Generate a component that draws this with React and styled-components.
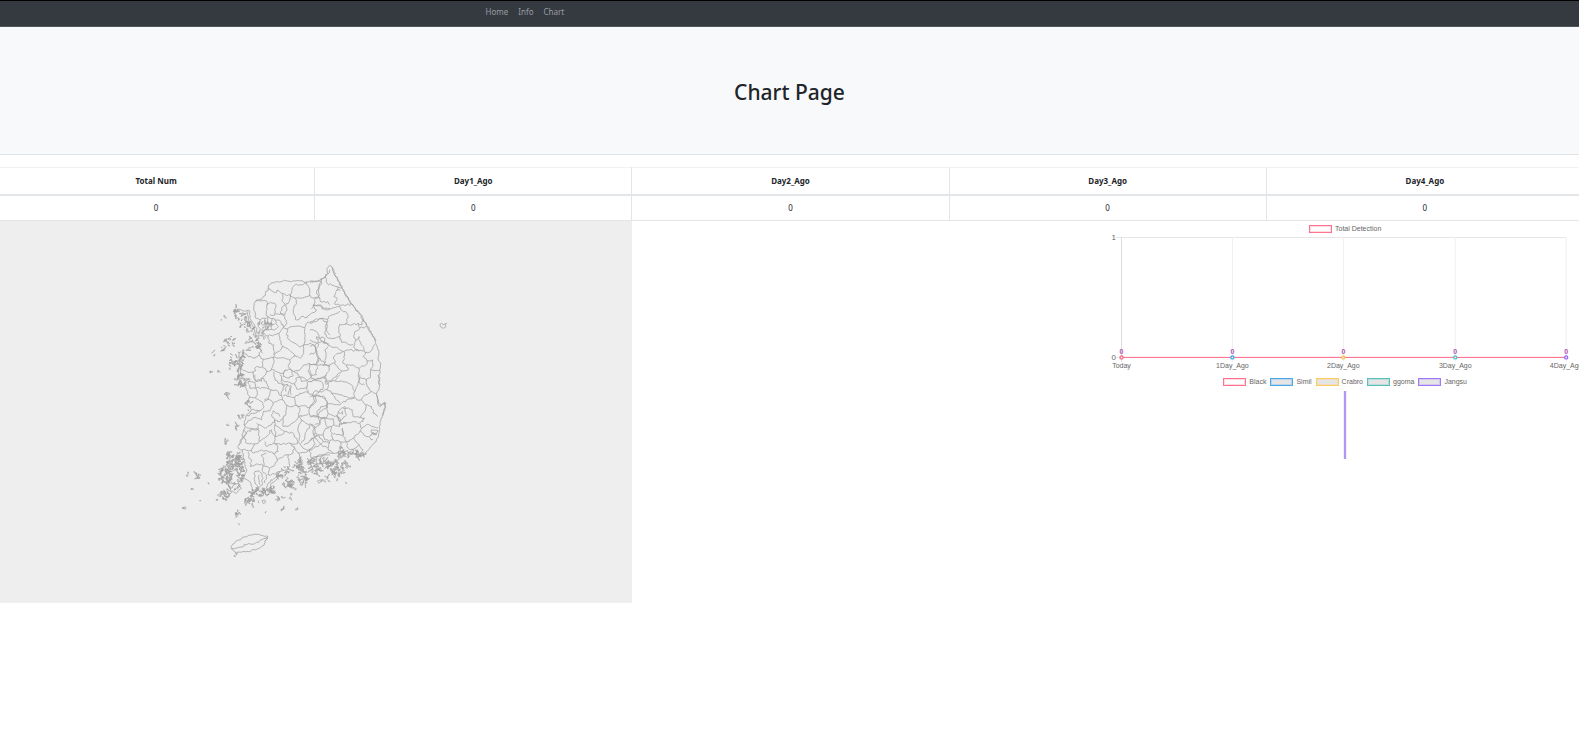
import React from "react";
import styled, { createGlobalStyle } from "styled-components";

const GlobalStyle = createGlobalStyle`
  * { box-sizing: border-box; }
  body {
    margin: 0;
    background: #fff;
    color: #212529;
    font-family: "Noto Sans", "Open Sans", sans-serif;
    font-size: 8px;
    line-height: 12px;
    overflow-x: hidden;
  }
`;

const NavBar = styled.nav`
  height: 27px;
  padding-top: 5px;
  background: #343a40;
  border-top: 1px solid #000;
  border-bottom: 1px solid #50555b;
`;

const NavInner = styled.div`
  display: flex;
  gap: 10px;
  max-width: 608px;
  margin: 0 auto;
`;

const NavLink = styled.a`
  color: #9a9da0;
  text-decoration: none;
`;

const Hero = styled.header`
  padding: 50px 16px 46px;
  background: #f8f9fb;
  border-bottom: 1px solid #e1e4e7;
  text-align: center;
`;

const Title = styled.h1`
  margin: 0;
  font-size: 21px;
  font-weight: 500;
  line-height: 31px;
`;

const TableWrap = styled.div`
  margin: 12px -5px 0 -3px;
`;

const Table = styled.table`
  width: 100%;
  table-layout: fixed;
  border-collapse: collapse;
  text-align: center;
`;

const HeadCell = styled.th`
  height: 27px;
  padding: 0;
  border: 1px solid #e3e6e9;
  border-top-color: #f1f2f4;
  border-bottom: 2px solid #e3e6e9;
  font-weight: 700;
`;

const Cell = styled.td`
  height: 26px;
  padding: 0;
  border: 1px solid #e3e6e9;
`;

const Panels = styled.main`
  display: flex;
  align-items: flex-start;
  justify-content: space-between;
`;

const MapPanel = styled.section`
  width: 40%;
  background: #eee;
`;

const MapDrawing = styled.svg`
  display: block;
  width: 100%;
  fill: none;
  stroke: #a0a0a0;
  stroke-linejoin: round;
`;

const ChartPanel = styled.section`
  width: 30%;
  padding: 4px 0 0 6px;
  overflow: hidden;
  color: #666;
  font-family: "Liberation Sans", Arial, sans-serif;
  font-size: 7px;
`;

const Legend = styled.ul`
  display: flex;
  justify-content: center;
  gap: 4px;
  margin: 0;
  padding: 0;
  list-style: none;
  line-height: 8px;
`;

const LegendItem = styled.li`
  display: flex;
  align-items: center;
  gap: 3px;
`;

const Swatch = styled.span`
  width: 23px;
  height: 8px;
  border: 1px solid ${(p) => p.$color};
  outline: 1px solid ${(p) => p.$color}44;
  outline-offset: -2px;
  background: ${(p) => (p.$filled ? "#e5e5e5" : "#fff")};
`;

const LineChart = styled.svg`
  display: block;
  width: 100%;
  font-size: 7px;
  fill: #666;
`;

const Doughnut = styled.svg`
  display: block;
  width: 4px;
  height: 68px;
  margin: 5px auto 0;
`;

/* Boundary lines, grouped by map sheet; three units make one pixel. */
const sheets = [
  {
    x: 200, y: 255,
    lines: [
      "163,150 168,137 185,133 197,115 205,100 212,88 228,80 250,78 275,80 300,78 320,82 345,79 360,78 372,68 384,58 390,45",
      "205,100 215,108 230,112 232,105 246,116 262,122 271,120",
      "320,80 326,95 330,108 328,122",
      "271,120 278,98 290,88 300,90 320,84",
      "271,120 285,130 305,130 322,125 330,120 340,130 360,128",
      "360,78 358,100 350,115 360,128 362,140 384,140 390,150",
      "163,150 165,170 168,190 182,195",
      "168,137 200,138 202,150 198,180 205,185",
      "200,150 212,142 228,148 224,165 225,180 210,180",
      "246,116 248,140 256,150 245,160 243,177 225,178",
      "271,120 268,140 258,152 262,165 255,180 243,177 255,185 262,205 250,218 262,222 275,215 295,213 315,218",
      "285,130 290,145 282,160 280,175 290,195 305,185 322,188 335,175 350,165 340,150 352,150 362,150 375,160 390,160",
      "315,218 320,205 345,195 360,190 380,200 378,225 390,240",
      "315,218 316,240 312,270 300,276 285,265 268,255 260,240 262,222",
      "312,270 330,265 345,275 355,260 350,245 375,250 372,265 388,268",
      "250,218 238,235 222,240 205,243 190,235",
      "238,235 240,255 250,275 235,290 222,300",
      "205,243 207,265 222,270 225,290 220,308 190,313 178,300 185,285 170,270",
      "250,275 268,285 285,300 300,310 312,295 312,270",
      "220,308 250,308 270,315 285,300",
      "270,315 265,335 282,350 300,345 312,330 325,325 350,330 355,310 352,290 345,275",
      "220,308 222,325 215,345 230,350 250,355 256,345 275,345 280,360 268,370 250,365 256,345",
      "190,313 188,335 200,350 215,345",
      "130,290 145,305 165,310 178,300",
      "120,340 140,350 160,355 170,335 188,335",
      "160,355 165,375 185,380 200,350",
      "222,350 225,375 235,385 255,390",
      "330,325 325,350 335,365 350,360 352,335",
      "355,310 372,320 375,330 390,335",
      "282,350 300,365 305,380 325,375 335,365",
      "145,165 145,190 155,205 165,225 160,240 172,255 178,280 188,295",
      "147,165 150,190 160,205 172,222 166,240 178,252",
      "102,170 115,162 130,168 145,165",
      "115,290 120,320 115,350 120,375 125,390",
      "128,292 126,320 122,345 128,370 140,385",
      "182,195 195,190 205,185 225,195 236,215 225,225 205,225 185,225 175,215 182,195",
      "185,210 205,205 225,208",
      "205,187 207,225",
      "195,192 196,224",
      "217,192 216,222",
      "225,195 243,200 250,218",
    ],
  },
  {
    x: 310, y: 255,
    lines: [
      "0,78 15,80 27,78 36,72 47,66 53,55 54,38 60,31 66,35 70,50 78,66 87,80 95,98 105,118 120,140 135,160 150,178 158,192 170,215 185,238 196,258 205,285 206,305 212,330 210,345 208,365 208,390",
      "66,36 72,50 80,66 90,82 97,98 108,118 122,140 137,160 153,178 160,192 173,215 188,238 198,258",
      "36,72 32,90 26,105 26,125 16,130 12,150 5,162",
      "47,66 52,85 72,92 85,96 95,98",
      "85,96 78,108 92,106",
      "78,112 72,125 82,130 75,148 90,152 125,148",
      "12,150 28,152 38,162 55,165 75,158 90,155 94,165 108,170 115,182 112,200 105,208 90,208",
      "52,194 62,182 75,178 90,168",
      "0,205 20,200 38,190 52,194 52,215 45,238 55,250 75,250 90,245 88,225 90,208",
      "105,208 125,210 145,205 158,208 158,192",
      "145,205 150,220 135,230 132,248 138,258 134,280 148,288",
      "150,220 168,215",
      "90,245 95,262 115,268 130,270",
      "138,258 148,245 153,265 162,278 165,288",
      "0,255 20,265 45,262 60,272 85,280 100,290 120,285 148,288 180,292 190,275 196,268",
      "45,262 30,250 20,230 0,225",
      "25,265 18,290 28,310 20,330 40,332 48,310 45,285 55,275",
      "20,330 0,330",
      "40,332 60,330 75,325 72,305 85,295 100,290",
      "75,325 85,340 95,348 115,345 110,330 100,325 105,300 105,290",
      "110,330 130,330 148,340 168,330 172,318 160,305 168,292",
      "172,318 188,315 190,330 182,345 210,346",
      "148,340 146,365 150,385 165,390",
      "182,345 180,370 168,375",
      "60,330 55,350 45,365 50,390",
      "95,348 80,365 65,378 50,380",
      "0,345 5,372 25,370 45,365",
      "0,275 12,270 20,290 0,300",
      "391,208 396,206 402,209 410,205 409,215 402,220 395,218 391,208",
    ],
  },
  {
    x: 200, y: 375,
    lines: [
      "115,0 122,20 130,32 140,45 148,70 142,90 155,105 140,120 132,150 148,160 175,163",
      "132,165 140,175 130,190 120,205 115,220 128,225 130,245 135,265 140,290 130,310 150,320 165,350",
      "135,155 130,175 124,192 117,210",
      "148,70 165,68 190,85 192,95 180,108 155,105",
      "145,20 165,22 168,40 172,60 165,68",
      "168,40 185,38 205,42 215,45 210,60 205,72 193,80",
      "165,0 168,20 185,10 200,20 207,42",
      "130,10 150,12 145,20 150,40 168,40",
      "215,45 235,50 245,62 248,75 230,80 220,85 210,75 193,75",
      "245,62 252,35 245,15 240,0",
      "248,75 260,90 258,110 250,130 240,140 225,135 215,120 220,108 235,115 240,125",
      "192,108 210,108 220,85",
      "260,90 280,95 290,92 300,100 297,125 285,140 270,152 250,155 250,130",
      "140,122 165,115 180,108",
      "132,150 155,135 165,128 185,135 190,120 192,108",
      "175,163 178,150 195,160 215,150 225,135",
      "170,145 178,150",
      "132,185 145,168 160,163 175,163 178,200 165,207 140,205 132,185",
      "178,200 195,190 215,165 225,185 220,205 200,215 195,200",
      "165,207 155,225 128,225",
      "155,225 160,235 185,225 205,230 220,235 235,230 232,210 222,205",
      "225,185 245,180 255,170 280,175 290,190 295,205 270,205 240,208 222,205",
      "225,135 225,150 245,165 255,170",
      "225,150 225,185",
      "297,125 305,135 295,160 300,185 295,200 310,220 330,225 345,210 340,190 325,205 312,210",
      "305,135 318,145 332,150 320,170 315,190 305,205",
      "297,95 315,92 330,98 328,115 312,122 297,125",
      "250,62 270,65 285,68 290,92 297,95",
      "285,68 300,55 325,52 340,65 345,80 330,98",
      "325,52 322,35 325,20 310,8 288,10 285,30 290,42 305,40 322,35",
      "252,35 262,28 272,38 265,62",
      "245,15 265,22 285,30",
      "262,28 258,50",
      "272,30 275,60",
      "340,65 360,62 375,68 382,80 380,100 360,110 355,125 330,122 328,115",
      "355,125 360,150 345,160 332,150",
      "345,175 360,190 370,200 390,205",
      "345,160 342,190",
      "325,20 345,15 365,20 370,38 360,50 345,48 340,62",
      "355,125 375,130 378,150 388,160",
      "145,232 155,260 150,275 175,268 190,272 192,250 185,240 200,235",
      "190,272 210,280 225,270 232,255 220,235",
      "210,280 205,300 225,298 240,290",
      "232,255 250,245 265,240 280,235 282,215 270,205",
      "165,290 178,288 187,300 188,330 175,340 165,320 165,290",
      "178,300 180,330",
      "190,272 188,290 200,300 195,325",
      "282,215 295,235 300,250 310,260",
      "295,235 320,232 330,225",
      "265,240 268,265 265,285 240,290 225,310 205,325 200,345",
      "240,290 235,310 215,325 208,345",
      "330,225 335,250 350,245 370,240 390,240",
      "335,250 332,262 350,270 375,265 390,266",
      "90,340 115,325 125,340 110,355 92,350 90,340",
      "350,245 350,300",
      "300,265 318,300 316,340",
    ],
  },
  {
    x: 310, y: 375,
    lines: [
      "205,0 210,15 208,40 200,60 204,85 212,95 225,82 226,95 218,120 212,150 208,175 200,195 180,220 165,240",
      "202,60 206,84 213,92 228,84 228,98 220,122",
      "0,20 20,15 45,10 50,0",
      "45,10 55,28 60,20 75,18 90,0",
      "55,28 52,45 65,55 90,60 110,65 132,70 135,50 130,35 115,25 95,18 75,18",
      "135,50 145,25 150,0",
      "150,8 170,15 172,35 185,50 200,55",
      "132,70 155,75 165,60 185,50",
      "52,45 30,50 18,60 0,65",
      "18,60 15,85 0,100",
      "18,62 35,65 48,75 52,90 70,88 90,90 100,80 132,70",
      "65,55 80,75 90,85",
      "52,90 40,95 25,105 22,125 35,132 50,130 55,115 52,90",
      "155,75 168,90 165,110 150,128 130,125 128,105 110,100 100,100",
      "168,90 185,95 190,115 205,125",
      "55,115 75,125 85,115 95,100 105,95 110,120 95,135 80,125",
      "85,112 100,118 98,108",
      "70,130 72,150 90,155 88,135",
      "0,145 15,155 10,175 15,185 0,200",
      "0,125 22,125",
      "15,150 30,145 35,132 50,130 70,132",
      "15,185 40,180 48,160 65,155 72,150",
      "88,150 110,145 130,140 150,145 155,160 150,170 130,190 110,200 100,180 98,160",
      "150,145 165,130 150,128",
      "155,160 175,148 205,160",
      "185,165 205,168 198,180 186,175 185,165",
      "150,170 170,185 190,195",
      "98,160 100,180 70,178",
      "110,200 115,220 130,225 148,210 135,195 130,190",
      "148,210 160,225 150,240",
      "40,180 45,195 60,200 70,195 65,178 65,155",
      "60,200 55,220 70,235 90,230 95,215 90,200 70,195",
      "90,200 110,200",
      "0,225 25,215 40,200",
      "15,185 30,205 40,215 55,220",
      "15,245 30,240 50,235 70,235",
      "90,230 115,238 140,236 165,240",
      "40,240 30,265",
    ],
  },
  {
    x: 170, y: 430,
    lines: [
      "183,352 190,342 202,332 222,322 245,316 268,313 285,320 292,325 285,340 275,350 258,360 235,365 215,367 200,370 190,362 183,352",
      "186,356 210,352 230,345 255,342 270,332 288,326",
      "196,368 200,376 203,368",
      "288,318 294,320 292,328",
      "277,212 285,211 287,218 280,221 277,212",
      "265,213 267,220",
    ],
  },
];

/* Island groups along the coast: centre x, centre y, spread x, spread y, count. */
const islands = [
  [237, 312, 4, 4, 16], [242, 317, 5, 3, 7], [244, 325, 6, 6, 18], [251, 330, 5, 6, 10],
  [229, 341, 7, 6, 15], [255, 344, 7, 8, 26], [223, 348, 2, 3, 5], [236, 363, 7, 9, 32],
  [243, 355, 4, 4, 8], [213, 372, 9, 1, 5], [222, 320, 5, 5, 3], [213, 355, 3, 2, 2],
  [266, 325, 8, 5, 14], [260, 334, 4, 3, 8], [241, 380, 5, 8, 22], [243, 384, 4, 3, 10],
  [225, 394, 3, 1, 4], [249, 406, 3, 6, 10], [242, 416, 3, 2, 7], [236, 427, 2, 2, 5],
  [229, 426, 1, 1, 1], [226, 442, 2, 3, 5], [234, 456, 8, 4, 30], [237, 464, 6, 7, 46],
  [226, 475, 7, 9, 62], [231, 468, 6, 8, 28], [241, 475, 4, 8, 30], [225, 495, 5, 5, 22],
  [233, 486, 8, 5, 14], [250, 501, 5, 3, 20], [252, 493, 3, 3, 8], [260, 492, 7, 4, 28],
  [271, 491, 4, 4, 22], [280, 476, 4, 3, 10], [289, 484, 6, 5, 28], [299, 465, 5, 4, 24],
  [303, 477, 5, 8, 28], [287, 471, 4, 4, 10], [315, 463, 6, 6, 28], [317, 472, 5, 5, 12],
  [327, 465, 6, 3, 18], [338, 466, 10, 9, 56], [352, 454, 13, 3, 34], [343, 452, 4, 4, 12],
  [374, 433, 3, 2, 3], [325, 479, 4, 3, 9], [337, 474, 4, 5, 14], [341, 419, 5, 5, 4],
  [346, 483, 2, 1, 1], [198, 475, 2, 4, 10], [188, 475, 1, 2, 2],
  [192, 490, 1, 2, 2], [184, 508, 2, 2, 4], [200, 501, 1, 1, 1], [238, 513, 3, 3, 8],
  [283, 509, 2, 1, 5], [296, 509, 2, 1, 2], [266, 513, 1, 1, 1], [239, 525, 1, 1, 1],
  [280, 498, 5, 3, 8], [290, 495, 2, 2, 2], [210, 484, 1, 1, 1], [218, 500, 2, 1, 2],
  [235, 557, 1, 1, 1],
];

function makeRandom(seed) {
  let s = seed;
  return () => {
    s = (s * 1103515245 + 12345) % 2147483648;
    return s / 2147483648;
  };
}

/* Adds small bends between the vertices so that a border reads as surveyed. */
function ragged(points, rand) {
  const pts = points.split(" ").map((p) => p.split(",").map(Number));
  const out = [pts[0]];
  for (let i = 1; i < pts.length; i++) {
    const [ax, ay] = pts[i - 1];
    const [bx, by] = pts[i];
    const parts = Math.max(1, Math.round(Math.hypot(bx - ax, by - ay) / 6));
    for (let k = 1; k < parts; k++) {
      out.push([
        ax + ((bx - ax) * k) / parts + (rand() - 0.5) * 6,
        ay + ((by - ay) * k) / parts + (rand() - 0.5) * 6,
      ]);
    }
    out.push([bx, by]);
  }
  return out.map(([x, y]) => x.toFixed(1) + "," + y.toFixed(1)).join(" ");
}

const borderRandom = makeRandom(41);
const borders = sheets.map((s) => ({
  ...s,
  lines: s.lines.map((l) => ragged(l, borderRandom)),
}));

const islandRandom = makeRandom(97);
const islandPath = islands
  .map(([cx, cy, rx, ry, n]) => {
    let d = "";
    for (let i = 0; i < n; i++) {
      const a = islandRandom() * Math.PI * 2;
      const r = Math.sqrt(islandRandom());
      const x = cx + Math.cos(a) * r * rx;
      const y = cy + Math.sin(a) * r * ry;
      const size = 1 + islandRandom() * 1.4;
      const steps = [0, 1, 2].map(
        () =>
          `l${((islandRandom() - 0.5) * 2 * size).toFixed(1)} ${((islandRandom() - 0.5) * 2 * size).toFixed(1)}`
      );
      d += `M${x.toFixed(1)} ${y.toFixed(1)}${steps.join("")}z`;
    }
    return d;
  })
  .join("");

function KoreaMap() {
  return (
    <MapDrawing viewBox="0 221 632 382" role="img" aria-label="Map of South Korea">
      {borders.map((s) => (
        <g key={s.x + "-" + s.y} transform={`translate(${s.x} ${s.y}) scale(0.33333)`} strokeWidth="2.3">
          {s.lines.map((l, i) => (
            <polyline key={i} points={l} />
          ))}
        </g>
      ))}
      <path d={islandPath} strokeWidth="0.7" />
    </MapDrawing>
  );
}

const columns = [
  { name: "Total Num", value: 0 },
  { name: "Day1_Ago", value: 0 },
  { name: "Day2_Ago", value: 0 },
  { name: "Day3_Ago", value: 0 },
  { name: "Day4_Ago", value: 0 },
];

const days = [
  { label: "Today", x: 10, color: "#ff6384" },
  { label: "1Day_Ago", x: 121, color: "#36a2eb" },
  { label: "2Day_Ago", x: 232, color: "#fbc050" },
  { label: "3Day_Ago", x: 344, color: "#4bc0c0" },
  { label: "4Day_Ago", x: 455, color: "#9966ff" },
];

const species = [
  { name: "Black", color: "#ff7390", filled: false },
  { name: "Simil", color: "#4aa8e8", filled: true },
  { name: "Crabro", color: "#fbcb62", filled: true },
  { name: "ggoma", color: "#56bfbd", filled: true },
  { name: "Jangsu", color: "#a078f8", filled: true },
];

function DetectionChart() {
  return (
    <LineChart viewBox="0 0 468 145" role="img" aria-label="Total detection by day">
      <g fill="none" stroke="#e6e6e6">
        <path d="M5 4.5H455M5 124.5H10" />
        {days.map((d, i) => (
          <path key={d.label} d={`M${d.x + 0.5} 4V129`} stroke={i ? "#efefef" : "#dcdcdc"} />
        ))}
      </g>
      <text x="5" y="7" fontSize="8" textAnchor="end">1</text>
      <text x="5" y="127" fontSize="8" textAnchor="end">0</text>
      <path d="M10 124.5H455" fill="none" stroke="#ff6384" />
      {days.map((d) => (
        <g key={d.label}>
          <circle cx={d.x + 0.5} cy="124.5" r="1.6" fill="#e5e5e5" stroke={d.color} strokeWidth="1.2" />
          <text x={d.x + 0.5} y="121" textAnchor="middle" fontWeight="700" fill="#b050b0">0</text>
          <text x={d.x + 0.5} y="135" textAnchor="middle">{d.label}</text>
        </g>
      ))}
    </LineChart>
  );
}

export default function App() {
  return (
    <>
      <GlobalStyle />
      <NavBar>
        <NavInner>
          <NavLink href="#home">Home</NavLink>
          <NavLink href="#info">Info</NavLink>
          <NavLink href="#chart">Chart</NavLink>
        </NavInner>
      </NavBar>
      <Hero>
        <Title>Chart Page</Title>
      </Hero>
      <TableWrap>
        <Table>
          <thead>
            <tr>
              {columns.map((c) => (
                <HeadCell key={c.name} scope="col">{c.name}</HeadCell>
              ))}
            </tr>
          </thead>
          <tbody>
            <tr>
              {columns.map((c) => (
                <Cell key={c.name}>{c.value}</Cell>
              ))}
            </tr>
          </tbody>
        </Table>
      </TableWrap>
      <Panels>
        <MapPanel>
          <KoreaMap />
        </MapPanel>
        <ChartPanel>
          <Legend>
            <LegendItem>
              <Swatch $color="#ff7390" />
              Total Detection
            </LegendItem>
          </Legend>
          <DetectionChart />
          <Legend>
            {species.map((s) => (
              <LegendItem key={s.name}>
                <Swatch $color={s.color} $filled={s.filled} />
                {s.name}
              </LegendItem>
            ))}
          </Legend>
          <Doughnut viewBox="0 0 4 68" aria-hidden="true">
            <path d="M2 0V68" stroke="#e5e0f5" strokeWidth="3" />
            <path d="M2 0V68" stroke="#9b78f0" strokeWidth="1.4" />
          </Doughnut>
        </ChartPanel>
      </Panels>
    </>
  );
}
